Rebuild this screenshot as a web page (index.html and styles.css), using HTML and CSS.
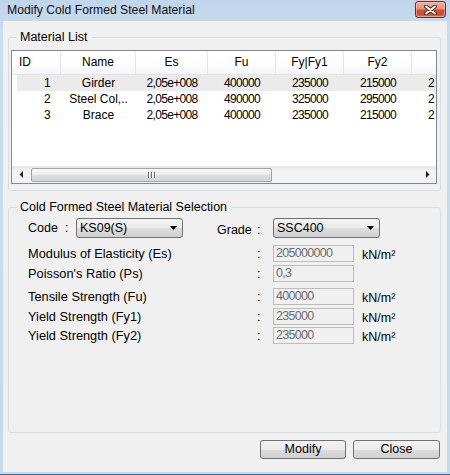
FILE: index.html
```html
<!DOCTYPE html>
<html>
<head>
<meta charset="utf-8">
<link rel="stylesheet" href="styles.css">
</head>
<body>
<div class="window">
  <div class="titlebar">
    <span class="title">Modify Cold Formed Steel Material</span>
    <div class="close-btn">
      <svg width="13" height="10" viewBox="0 0 13 10">
        <path d="M2 1.5 L11 8.5 M11 1.5 L2 8.5" stroke="#4a2520" stroke-width="3.8" stroke-linecap="round" fill="none"/>
        <path d="M2 1.5 L11 8.5 M11 1.5 L2 8.5" stroke="#ffffff" stroke-width="2" stroke-linecap="round" fill="none"/>
      </svg>
    </div>
  </div>
  <div class="client">
    <fieldset class="group group-list">
      <legend>Material List</legend>
      <div class="list-body">
        <div class="listview">
          <div class="lv-viewport">
            <div class="lv-header">
              <div class="hcell left">ID</div>
              <div class="hcell">Name</div>
              <div class="hcell">Es</div>
              <div class="hcell">Fu</div>
              <div class="hcell">Fy|Fy1</div>
              <div class="hcell">Fy2</div>
              <div class="hcell"></div>
            </div>
            <div class="lv-row sel">
              <div class="cell right num">1</div>
              <div class="cell">Girder</div>
              <div class="cell num">2,05e+008</div>
              <div class="cell num">400000</div>
              <div class="cell num">235000</div>
              <div class="cell num">215000</div>
              <div class="cell last num">2</div>
            </div>
            <div class="lv-row">
              <div class="cell right num">2</div>
              <div class="cell">Steel Col,..</div>
              <div class="cell num">2,05e+008</div>
              <div class="cell num">490000</div>
              <div class="cell num">325000</div>
              <div class="cell num">295000</div>
              <div class="cell last num">2</div>
            </div>
            <div class="lv-row">
              <div class="cell right num">3</div>
              <div class="cell">Brace</div>
              <div class="cell num">2,05e+008</div>
              <div class="cell num">400000</div>
              <div class="cell num">235000</div>
              <div class="cell num">215000</div>
              <div class="cell last num">2</div>
            </div>
          </div>
          <div class="hscroll">
            <div class="sb-btn">
              <svg width="4" height="7" viewBox="0 0 4 7"><polygon points="4,0 4,7 0.5,3.5" fill="#202020"/></svg>
            </div>
            <div class="sb-track">
              <div class="thumb">
                <span class="grip"></span><span class="grip"></span><span class="grip"></span>
              </div>
            </div>
            <div class="sb-btn">
              <svg width="4" height="7" viewBox="0 0 4 7"><polygon points="0,0 0,7 3.5,3.5" fill="#202020"/></svg>
            </div>
          </div>
        </div>
      </div>
    </fieldset>

    <fieldset class="group group-sel">
      <legend>Cold Formed Steel Material Selection</legend>
      <div class="sel-body">
        <div class="code-row">
          <span class="code-lbl">Code</span><span class="code-colon">:</span>
          <div class="combo"><span class="combo-text">KS09(S)</span>
            <svg width="7" height="4" viewBox="0 0 7 4"><polygon points="0,0 7,0 3.5,4" fill="#000"/></svg>
          </div>
          <span class="grade-lbl">Grade</span><span class="grade-colon">:</span>
          <div class="combo"><span class="combo-text">SSC400</span>
            <svg width="7" height="4" viewBox="0 0 7 4"><polygon points="0,0 7,0 3.5,4" fill="#000"/></svg>
          </div>
        </div>
        <div class="props">
          <div class="prop">
            <span class="p-label">Modulus of Elasticity (Es)</span><span class="p-colon">:</span>
            <div class="tbox num">205000000</div><span class="unit">kN/m²</span>
          </div>
          <div class="prop">
            <span class="p-label">Poisson's Ratio (Ps)</span><span class="p-colon">:</span>
            <div class="tbox num">0,3</div>
          </div>
          <div class="prop sp">
            <span class="p-label">Tensile Strength (Fu)</span><span class="p-colon">:</span>
            <div class="tbox num">400000</div><span class="unit">kN/m²</span>
          </div>
          <div class="prop">
            <span class="p-label">Yield Strength (Fy1)</span><span class="p-colon">:</span>
            <div class="tbox num">235000</div><span class="unit">kN/m²</span>
          </div>
          <div class="prop tight">
            <span class="p-label">Yield Strength (Fy2)</span><span class="p-colon">:</span>
            <div class="tbox num">235000</div><span class="unit">kN/m²</span>
          </div>
        </div>
      </div>
    </fieldset>

    <div class="buttons">
      <div class="btn btn-modify">Modify</div>
      <div class="btn btn-close">Close</div>
    </div>
  </div>
</div>
</body>
</html>
```

FILE: styles.css
```css
html, body {
  margin: 0;
  padding: 0;
  background: #ffffff;
}

body {
  font-family: "Liberation Sans", Arial, sans-serif;
  font-size: 12.5px;
  color: #000;
}

.window {
  width: 450px;
  height: 475px;
  box-sizing: border-box;
  background: linear-gradient(#c0d5eb, #c9dcf0 30px, #c6daef);
  padding: 0 3px 2px 3px;
  border-bottom: 1px solid #44658a;
  display: flex;
  flex-direction: column;
}

.titlebar {
  height: 21px;
  display: flex;
  align-items: flex-start;
  padding-left: 4px;
}

.title {
  font-size: 12.2px;
  line-height: 21px;
  color: #111;
}

.close-btn {
  margin-left: auto;
  margin-right: 1px;
  margin-top: 1px;
  width: 31px;
  height: 17px;
  box-sizing: border-box;
  border: 1px solid #6a3028;
  border-radius: 3px;
  background: linear-gradient(#eab2a4 0%, #e0937f 45%, #cc5038 55%, #c8533b 85%, #d77a60 100%);
  box-shadow: inset 0 0 0 1px rgba(255, 220, 210, 0.45);
  display: flex;
  align-items: center;
  justify-content: center;
}

.client {
  flex: 1;
  background: #f0f0f0;
  display: flex;
  flex-direction: column;
  padding: 9px 0 13px 0;
}

.group {
  margin: 0 6px 0 5px;
  padding: 0;
  border: 1px solid #d5dfe5;
  border-radius: 3px;
  min-width: 0;
}

.group legend {
  margin-left: 8px;
  padding: 0 5px 0 3px;
  line-height: 14px;
  font-size: 12.5px;
}

.list-body {
  padding: 6px 3px 6px 2px;
}

.listview {
  height: 134px;
  box-sizing: border-box;
  border: 1px solid #828790;
  background: #fff;
  display: flex;
  flex-direction: column;
}

.lv-viewport {
  flex: 1;
  overflow: hidden;
}

.lv-header,
.lv-row {
  display: grid;
  grid-template-columns: 49px 75px 72px 68px 68px 68px 24px;
  font-size: 12px;
  white-space: nowrap;
}

.lv-header {
  height: 24px;
  box-sizing: border-box;
  background: linear-gradient(#ffffff 0%, #ffffff 45%, #f4f5f7 100%);
  border-bottom: 1px solid #e5e5e5;
}

.hcell {
  border-right: 1px solid #e3e5e8;
  line-height: 23px;
  text-align: center;
  overflow: hidden;
}

.hcell:last-child {
  border-right: none;
}

.hcell.left {
  text-align: left;
  padding-left: 7px;
}

.lv-row {
  height: 16px;
  line-height: 17px;
}

.lv-row.sel {
  background: linear-gradient(to right, transparent 5px, #ebebeb 5px);
}

.cell {
  text-align: center;
  overflow: hidden;
}

.cell.right {
  text-align: right;
  padding-right: 11px;
}

.cell.last {
  text-align: left;
  padding-left: 16px;
}

.num {
  letter-spacing: -0.7px;
}

.hscroll {
  height: 17px;
  display: flex;
  background: linear-gradient(#e6e6e6 0%, #f2f2f2 25%, #f4f4f4 100%);
}

.sb-btn {
  width: 17px;
  display: flex;
  align-items: center;
  justify-content: center;
}

.sb-track {
  flex: 1;
}

.thumb {
  margin-left: 2px;
  margin-top: 2px;
  width: 241px;
  height: 14px;
  box-sizing: border-box;
  border: 1px solid #a3a3a3;
  border-radius: 2px;
  background: linear-gradient(#f6f6f6 0%, #ececec 50%, #dcdcdc 51%, #d6d6d6 100%);
  display: flex;
  align-items: center;
  justify-content: center;
  gap: 1px;
}

.grip {
  width: 1px;
  height: 6px;
  background: #6a6a6a;
  box-shadow: 1px 0 0 #fafafa;
  margin: 0 1px 0 0;
}

.group-sel {
  flex: 1;
  margin-top: 9px;
}

.sel-body {
  padding: 4px 0 0 19px;
}

.code-row {
  display: flex;
  align-items: center;
  height: 20px;
}

.code-lbl {
  width: 37px;
}

.code-colon {
  width: 11px;
}

.grade-lbl {
  width: 40px;
  margin-left: 34px;
  padding-top: 4px;
}

.grade-colon {
  width: 16px;
  padding-top: 4px;
}

.combo {
  width: 107px;
  height: 20px;
  box-sizing: border-box;
  border: 1px solid #707070;
  border-radius: 3px;
  background: linear-gradient(#f3f3f3 0%, #ebebeb 50%, #dddddd 51%, #d0d0d0 100%);
  display: flex;
  align-items: center;
  padding: 0 5px 0 3px;
}

.combo-text {
  flex: 1;
}

.props {
  margin-top: 7px;
}

.prop {
  display: flex;
  align-items: center;
  height: 17px;
}

.prop + .prop {
  margin-top: 3px;
}

.prop.sp {
  margin-top: 6px;
}

.prop.tight {
  margin-top: 2px;
}

.p-label {
  width: 229px;
  font-size: 12.8px;
}

.p-colon {
  width: 16px;
}

.tbox {
  width: 81px;
  height: 17px;
  box-sizing: border-box;
  border: 1px solid #bcbcbc;
  background: #f0f0f0;
  color: #6d6d6d;
  line-height: 15px;
  padding-left: 2px;
}

.unit {
  margin-left: 8px;
  padding-top: 3px;
}

.buttons {
  display: flex;
  justify-content: flex-end;
  gap: 7px;
  margin: 7px 7px 0 0;
}

.btn {
  height: 19px;
  box-sizing: border-box;
  border: 1px solid #707070;
  border-radius: 3px;
  background: linear-gradient(#f3f3f3 0%, #ebebeb 50%, #dddddd 51%, #d0d0d0 100%);
  text-align: center;
  line-height: 17px;
}

.btn-modify {
  width: 86px;
}

.btn-close {
  width: 87px;
}
```
